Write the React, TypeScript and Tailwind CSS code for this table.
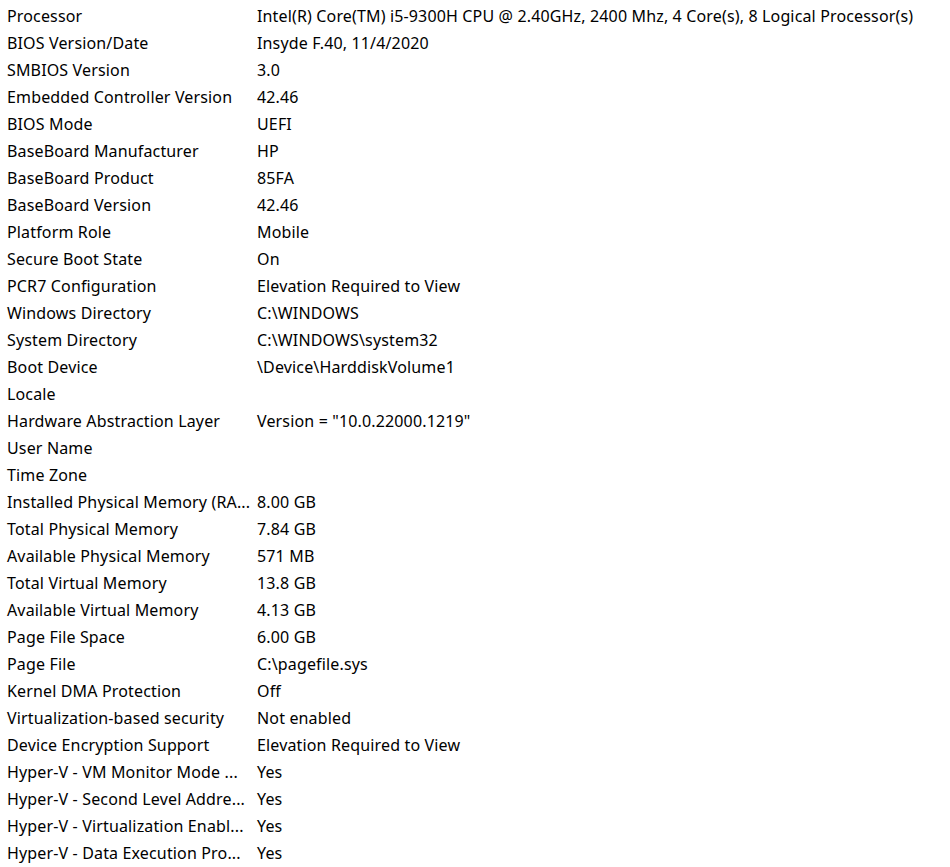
import React from "react";

const rows: [string, string][] = [
  ["Processor", "Intel(R) Core(TM) i5-9300H CPU @ 2.40GHz, 2400 Mhz, 4 Core(s), 8 Logical Processor(s)"],
  ["BIOS Version/Date", "Insyde F.40, 11/4/2020"],
  ["SMBIOS Version", "3.0"],
  ["Embedded Controller Version", "42.46"],
  ["BIOS Mode", "UEFI"],
  ["BaseBoard Manufacturer", "HP"],
  ["BaseBoard Product", "85FA"],
  ["BaseBoard Version", "42.46"],
  ["Platform Role", "Mobile"],
  ["Secure Boot State", "On"],
  ["PCR7 Configuration", "Elevation Required to View"],
  ["Windows Directory", "C:\\WINDOWS"],
  ["System Directory", "C:\\WINDOWS\\system32"],
  ["Boot Device", "\\Device\\HarddiskVolume1"],
  ["Locale", ""],
  ["Hardware Abstraction Layer", "Version = \"10.0.22000.1219\""],
  ["User Name", ""],
  ["Time Zone", ""],
  ["Installed Physical Memory (RA...", "8.00 GB"],
  ["Total Physical Memory", "7.84 GB"],
  ["Available Physical Memory", "571 MB"],
  ["Total Virtual Memory", "13.8 GB"],
  ["Available Virtual Memory", "4.13 GB"],
  ["Page File Space", "6.00 GB"],
  ["Page File", "C:\\pagefile.sys"],
  ["Kernel DMA Protection", "Off"],
  ["Virtualization-based security", "Not enabled"],
  ["Device Encryption Support", "Elevation Required to View"],
  ["Hyper-V - VM Monitor Mode ...", "Yes"],
  ["Hyper-V - Second Level Addre...", "Yes"],
  ["Hyper-V - Virtualization Enabl...", "Yes"],
  ["Hyper-V - Data Execution Pro...", "Yes"],
];

export default function App() {
  return (
    <div
      className="w-[950px] h-[867px] bg-white overflow-hidden pt-[3px] text-[16px] tracking-[0.15px] text-black"
      style={{ fontFamily: '"Noto Sans", "Open Sans", sans-serif' }}
    >
      {rows.map(([k, v]) => (
        <div key={k} className="flex h-[27px] leading-[27px] whitespace-nowrap">
          <div className="w-[250px] shrink-0 pl-[7px]">{k}</div>
          <div className="pl-[7px]">{v}</div>
        </div>
      ))}
    </div>
  );
}
